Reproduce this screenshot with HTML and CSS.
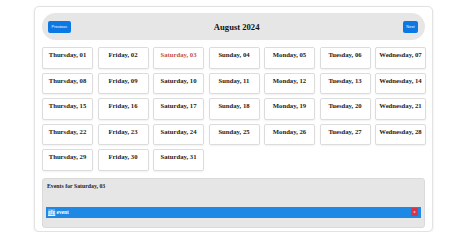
FILE: index.html
```html
<!DOCTYPE html>
<html>
<head>
<meta charset="utf-8">
<link rel="stylesheet" href="styles.css">
</head>
<body>
<div class="card">
  <div class="header">
    <button class="nav-btn">Previous</button>
    <h2 class="month">August 2024</h2>
    <button class="nav-btn">Next</button>
  </div>
  <div class="grid">
    <div class="day">Thursday, 01</div>
    <div class="day">Friday, 02</div>
    <div class="day selected">Saturday, 03</div>
    <div class="day">Sunday, 04</div>
    <div class="day">Monday, 05</div>
    <div class="day">Tuesday, 06</div>
    <div class="day">Wednesday, 07</div>
    <div class="day">Thursday, 08</div>
    <div class="day">Friday, 09</div>
    <div class="day">Saturday, 10</div>
    <div class="day">Sunday, 11</div>
    <div class="day">Monday, 12</div>
    <div class="day">Tuesday, 13</div>
    <div class="day">Wednesday, 14</div>
    <div class="day">Thursday, 15</div>
    <div class="day">Friday, 16</div>
    <div class="day">Saturday, 17</div>
    <div class="day">Sunday, 18</div>
    <div class="day">Monday, 19</div>
    <div class="day">Tuesday, 20</div>
    <div class="day">Wednesday, 21</div>
    <div class="day">Thursday, 22</div>
    <div class="day">Friday, 23</div>
    <div class="day">Saturday, 24</div>
    <div class="day">Sunday, 25</div>
    <div class="day">Monday, 26</div>
    <div class="day">Tuesday, 27</div>
    <div class="day">Wednesday, 28</div>
    <div class="day">Thursday, 29</div>
    <div class="day">Friday, 30</div>
    <div class="day">Saturday, 31</div>
  </div>
  <div class="events">
    <h4 class="events-title">Events for Saturday, 03</h4>
    <div class="event">
      <span class="event-text"><span class="hl">gfg</span> event</span>
      <button class="del">x</button>
    </div>
  </div>
</div>
</body>
</html>
```

FILE: styles.css
```css
html, body {
  margin: 0;
  padding: 0;
  background: #ffffff;
}
body {
  padding: 6px 0 0 34px;
  font-family: "Liberation Serif", "Times New Roman", serif;
}
.card {
  box-sizing: border-box;
  width: 399px;
  height: 226px;
  border: 1px solid #e2e2e2;
  border-radius: 5px;
  box-shadow: 0 1px 3px rgba(0,0,0,0.08);
  padding: 6px 7px 5px 7px;
  background: #fff;
}
.header {
  height: 27px;
  background: #e6e6e6;
  border-radius: 14px;
  display: flex;
  align-items: center;
  justify-content: space-between;
  padding: 0 7px 0 6px;
}
.month {
  margin: 0;
  font-size: 8.6px;
  font-weight: bold;
  color: #111;
}
.nav-btn {
  height: 12px;
  padding: 0 3.5px;
  border: none;
  border-radius: 2px;
  background: #0b78e3;
  color: #fff;
  font-family: "Liberation Sans", Arial, sans-serif;
  font-size: 4px;
  line-height: 12px;
}
.grid {
  margin-top: 7px;
  display: grid;
  grid-template-columns: repeat(7, 51px);
  grid-auto-rows: 21.5px;
  gap: 4px 4.5px;
}
.day {
  box-sizing: border-box;
  border: 1px solid #dcdcdc;
  border-radius: 2px;
  box-shadow: 0 1px 2px rgba(0,0,0,0.06);
  background: #fff;
  display: flex;
  align-items: flex-start;
  justify-content: center;
  padding-top: 3px;
  font-size: 6.7px;
  font-weight: bold;
  color: #222;
}
.day.selected {
  color: #c0504d;
}
.events {
  box-sizing: border-box;
  margin-top: 7px;
  height: 50px;
  background: #e6e6e6;
  border: 1px solid #dadada;
  border-radius: 3px;
  padding: 4px 3px 0 3px;
}
.events-title {
  margin: 0 0 0 1px;
  font-size: 5.8px;
  font-weight: bold;
  color: #222;
}
.event {
  margin-top: 18px;
  height: 11px;
  background: #1e88e5;
  display: flex;
  align-items: center;
  justify-content: space-between;
  padding: 0 3px 0 2px;
}
.event-text {
  font-size: 5.4px;
  font-weight: bold;
  color: #fff;
}
.hl {
  background: #5aa6ef;
  text-decoration: underline;
}
.del {
  width: 7px;
  height: 8px;
  padding: 0;
  border: none;
  border-radius: 1px;
  background: #d8354a;
  color: #fff;
  font-family: "Liberation Sans", Arial, sans-serif;
  font-size: 4px;
  line-height: 8px;
}
```
